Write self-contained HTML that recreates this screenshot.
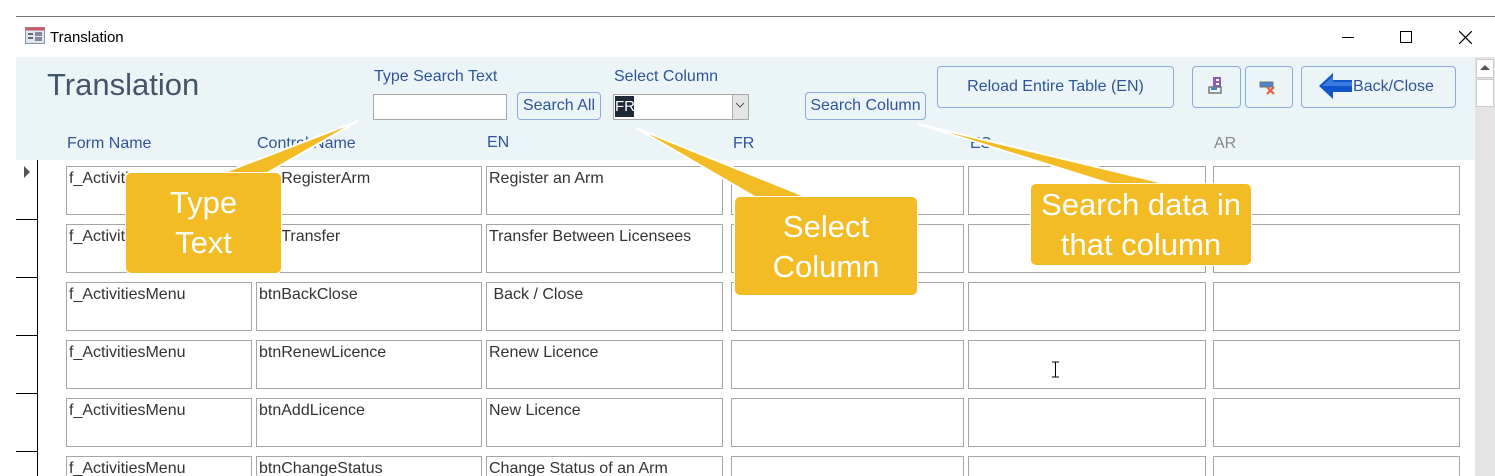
<!DOCTYPE html>
<html style="overflow:hidden"><head><style>
*{box-sizing:border-box;margin:0;padding:0}
html,body{width:1495px;height:476px;overflow:hidden}
body{background:#fff;font-family:"Liberation Sans",sans-serif;position:relative}
.a{position:absolute}
.lbl{position:absolute;font-size:16px;color:#2f5597;white-space:nowrap}
.tb{position:absolute;border:1px solid #a6a6a6;background:#fff;font-size:16px;color:#333;padding:3px 0 0 2px;white-space:nowrap;overflow:hidden;height:49px}
.tb.last{height:20px;border-bottom:none}
.btn{position:absolute;border:1px solid #8eaadb;border-radius:4px;background:#ebf5f8;font-size:16px;color:#2f5597;text-align:center;white-space:nowrap}
.call{position:absolute;background:#f4bc24;border-radius:6px;color:#fff;font-size:31px;text-align:center;line-height:40px}
</style></head><body>
<div class="a" style="left:16px;top:16px;width:1479px;height:1px;background:#777"></div>
<svg class="a" style="left:25px;top:27px" width="20" height="18"><rect x="0.5" y="0.5" width="19" height="16" fill="#dfe6ee" stroke="#8a94a4"/><rect x="0.5" y="0.5" width="19" height="3" fill="#c95a6a"/><rect x="3" y="6" width="5" height="2" fill="#667"/><rect x="3" y="10" width="5" height="2" fill="#667"/><rect x="10" y="5" width="7" height="4" fill="#889" /><rect x="10" y="10" width="7" height="4" fill="#889"/></svg>
<div class="a" style="left:50px;top:29px;font-size:15px;color:#000">Translation</div>
<div class="a" style="left:1342px;top:37px;width:12px;height:1px;background:#000"></div>
<div class="a" style="left:1400px;top:31px;width:12px;height:12px;border:1px solid #000"></div>
<svg class="a" style="left:1459px;top:31px" width="13" height="13"><path d="M0 0L13 13M13 0L0 13" stroke="#000" stroke-width="1.2"/></svg>

<div class="a" style="left:16px;top:57px;width:1459px;height:103px;background:#ebf5f8"></div>
<div class="a" style="left:1475px;top:57px;width:20px;height:419px;background:#e3e3e3"></div>
<div class="a" style="left:1476px;top:59px;width:18px;height:19px;background:#fff;border:1px solid #ccc"></div>
<svg class="a" style="left:1479px;top:64px" width="12" height="7"><path d="M1 6L6 1L11 6Z" fill="#555"/></svg>
<div class="a" style="left:1476px;top:79px;width:18px;height:28px;background:#fff;border:1px solid #ccc"></div>

<div class="a" style="left:47px;top:67px;font-size:31px;color:#44546a">Translation</div>
<div class="lbl" style="left:374px;top:68px">Type Search Text</div>
<div class="a" style="left:373px;top:94px;width:134px;height:26px;border:1px solid #a6a6a6;background:#fff"></div>
<div class="btn" style="left:517px;top:92px;width:84px;height:28px;line-height:26px">Search All</div>
<div class="lbl" style="left:614px;top:68px">Select Column</div>
<div class="a" style="left:613px;top:94px;width:136px;height:26px;border:1px solid #a6a6a6;background:#fff"></div>
<div class="a" style="left:615px;top:96px;width:19px;height:21px;background:#1e2a3a;color:#fff;font-size:15px;line-height:21px">FR</div>
<div class="a" style="left:732px;top:95px;width:16px;height:24px;background:#e4e4e4;border-left:1px solid #aaa"></div>
<svg class="a" style="left:735px;top:102px" width="10" height="7"><path d="M1 1L5 5L9 1" stroke="#555" fill="none"/></svg>
<div class="btn" style="left:805px;top:92px;width:121px;height:28px;line-height:26px">Search Column</div>
<div class="btn" style="left:937px;top:66px;width:237px;height:42px;line-height:40px">Reload Entire Table (EN)</div>
<div class="btn" style="left:1192px;top:66px;width:49px;height:42px"></div>
<svg class="a" style="left:1208px;top:77px" width="16" height="18"><rect x="5" y="0" width="8" height="10" fill="#8e5bb5"/><rect x="8" y="2" width="3" height="2" fill="#fff"/><rect x="8" y="6" width="3" height="2" fill="#fff"/><rect x="1" y="10" width="12" height="6" fill="none" stroke="#777" stroke-width="1.5"/><rect x="3" y="10" width="6" height="3" fill="#4a86c8"/></svg>
<div class="btn" style="left:1245px;top:66px;width:48px;height:42px"></div>
<svg class="a" style="left:1259px;top:81px" width="18" height="14"><rect x="1" y="1" width="13" height="5" fill="#4a86c8" stroke="#777"/><path d="M8 6L15 13M15 6L8 13" stroke="#e06040" stroke-width="2.2"/></svg>
<div class="btn" style="left:1301px;top:66px;width:155px;height:42px;line-height:40px;padding-left:30px">Back/Close</div>
<svg class="a" style="left:1319px;top:72px" width="33" height="28"><path d="M0 14L14 1V8H33V20H14V27Z" fill="#1155cc"/><path d="M3 14L14 4V10H33V14Z" fill="#3b7be0"/></svg>

<div class="lbl" style="left:67px;top:135px">Form Name</div>
<div class="lbl" style="left:257px;top:135px">Control Name</div>
<div class="lbl" style="left:487px;top:134px">EN</div>
<div class="lbl" style="left:733px;top:135px">FR</div>
<div class="lbl" style="left:970px;top:135px">ES</div>
<div class="lbl" style="left:1214px;top:135px;color:#888">AR</div>

<div class="a" style="left:37px;top:160px;width:1px;height:316px;background:#000"></div>
<svg class="a" style="left:24px;top:166px" width="7" height="12"><path d="M0 0L6 6L0 12Z" fill="#555"/></svg>
<div class="a" style="left:16px;top:219px;width:21px;height:1px;background:#000"></div>
<div class="a" style="left:16px;top:277px;width:21px;height:1px;background:#000"></div>
<div class="a" style="left:16px;top:335px;width:21px;height:1px;background:#000"></div>
<div class="a" style="left:16px;top:393px;width:21px;height:1px;background:#000"></div>
<div class="a" style="left:16px;top:451px;width:21px;height:1px;background:#000"></div>

<div class="tb" style="left:66px;top:166px;width:186px">f_ActivitiesMenu</div><div class="tb" style="left:256px;top:166px;width:226px">btnRegisterArm</div><div class="tb" style="left:486px;top:166px;width:237px">Register an Arm</div><div class="tb" style="left:731px;top:166px;width:233px"></div><div class="tb" style="left:968px;top:166px;width:238px"></div><div class="tb" style="left:1213px;top:166px;width:247px"></div>
<div class="tb" style="left:66px;top:224px;width:186px">f_ActivitiesMenu</div><div class="tb" style="left:256px;top:224px;width:226px">btnTransfer</div><div class="tb" style="left:486px;top:224px;width:237px">Transfer Between Licensees</div><div class="tb" style="left:731px;top:224px;width:233px"></div><div class="tb" style="left:968px;top:224px;width:238px"></div><div class="tb" style="left:1213px;top:224px;width:247px"></div>
<div class="tb" style="left:66px;top:282px;width:186px">f_ActivitiesMenu</div><div class="tb" style="left:256px;top:282px;width:226px">btnBackClose</div><div class="tb" style="left:486px;top:282px;width:237px">&nbsp;Back / Close</div><div class="tb" style="left:731px;top:282px;width:233px"></div><div class="tb" style="left:968px;top:282px;width:238px"></div><div class="tb" style="left:1213px;top:282px;width:247px"></div>
<div class="tb" style="left:66px;top:340px;width:186px">f_ActivitiesMenu</div><div class="tb" style="left:256px;top:340px;width:226px">btnRenewLicence</div><div class="tb" style="left:486px;top:340px;width:237px">Renew Licence</div><div class="tb" style="left:731px;top:340px;width:233px"></div><div class="tb" style="left:968px;top:340px;width:238px"></div><div class="tb" style="left:1213px;top:340px;width:247px"></div>
<div class="tb" style="left:66px;top:398px;width:186px">f_ActivitiesMenu</div><div class="tb" style="left:256px;top:398px;width:226px">btnAddLicence</div><div class="tb" style="left:486px;top:398px;width:237px">New Licence</div><div class="tb" style="left:731px;top:398px;width:233px"></div><div class="tb" style="left:968px;top:398px;width:238px"></div><div class="tb" style="left:1213px;top:398px;width:247px"></div>
<div class="tb last" style="left:66px;top:456px;width:186px">f_ActivitiesMenu</div><div class="tb last" style="left:256px;top:456px;width:226px">btnChangeStatus</div><div class="tb last" style="left:486px;top:456px;width:237px">Change Status of an Arm</div><div class="tb last" style="left:731px;top:456px;width:233px"></div><div class="tb last" style="left:968px;top:456px;width:238px"></div><div class="tb last" style="left:1213px;top:456px;width:247px"></div>
<svg class="a" style="left:1051px;top:361px" width="9" height="17"><path d="M1 1H8M4.5 1V16M1 16H8" stroke="#000" fill="none"/></svg>

<svg class="a" style="left:0;top:0" width="1495" height="476">
<path d="M358 121L215 176L262 176Z" fill="#f4bc24" stroke="#fff" stroke-width="2" stroke-linejoin="round"/>
<path d="M636 128L760 200L814 200Z" fill="#f4bc24" stroke="#fff" stroke-width="2" stroke-linejoin="round"/>
<path d="M918 124L1120 187L1180 187Z" fill="#f4bc24" stroke="#fff" stroke-width="2" stroke-linejoin="round"/>
</svg>
<div class="call" style="left:125px;top:172px;width:157px;height:102px;padding-top:10px;border:1px solid #fff">Type<br>Text</div>
<div class="call" style="left:734px;top:196px;width:184px;height:100px;padding-top:10px;border:1px solid #fff">Select<br>Column</div>
<div class="call" style="left:1030px;top:183px;width:222px;height:83px;padding-top:1px;border:1px solid #fff">Search data in<br>that column</div>
</body></html>
